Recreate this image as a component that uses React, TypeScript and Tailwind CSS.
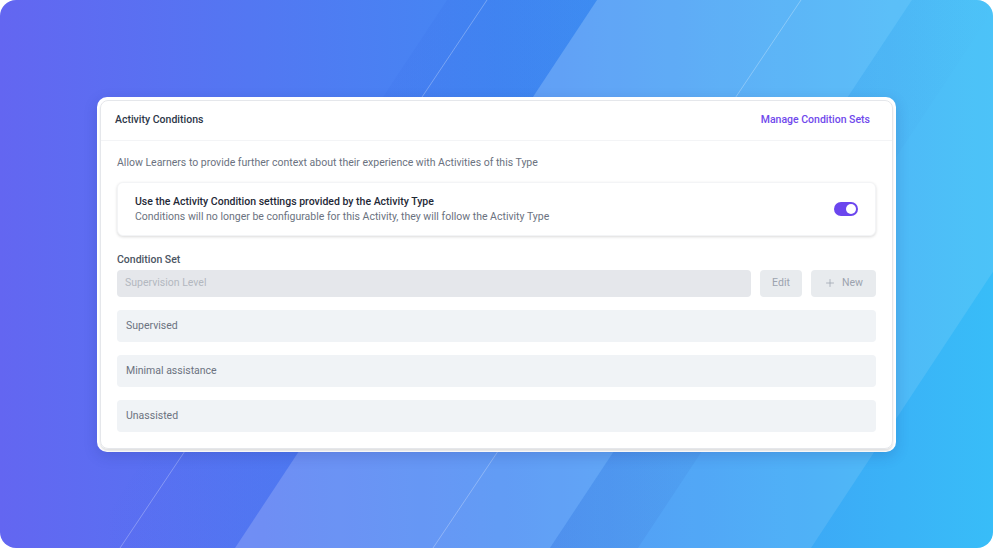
import React from "react";
import { Plus } from "lucide-react";

function Background() {
  return (
    <svg
      className="absolute inset-0 h-full w-full"
      viewBox="0 0 993 548"
      preserveAspectRatio="none"
    >
      <defs>
        <linearGradient id="base" x1="0" y1="0" x2="993" y2="0" gradientUnits="userSpaceOnUse">
          <stop offset="0" stopColor="#6366f1" />
          <stop offset="0.5" stopColor="#4388f3" />
          <stop offset="1" stopColor="#38bdf8" />
        </linearGradient>
        <linearGradient id="shadeA" x1="0" y1="0" x2="1" y2="0">
          <stop offset="0" stopColor="#1d4ed8" stopOpacity="0" />
          <stop offset="1" stopColor="#1d4ed8" stopOpacity="0.1" />
        </linearGradient>
        <linearGradient id="shadeB" x1="0" y1="0" x2="1" y2="0">
          <stop offset="0" stopColor="#1e40af" stopOpacity="0.1" />
          <stop offset="1" stopColor="#1e40af" stopOpacity="0" />
        </linearGradient>
      </defs>
      <rect x="0" y="0" width="993" height="548" fill="url(#base)" />
      <polygon points="447,0 597,0 235,548 85,548" fill="url(#shadeA)" />
      <polygon points="597,0 912,0 550,548 235,548" fill="#ffffff" fillOpacity="0.17" />
      <polygon points="912,0 1172,0 811,548 550,548" fill="#ffffff" fillOpacity="0.1" />
      <polygon points="912,0 1000,0 638,548 550,548" fill="url(#shadeB)" />
      <line x1="487" y1="0" x2="120" y2="548" stroke="#ffffff" strokeOpacity="0.28" strokeWidth="1" />
      <line x1="801" y1="0" x2="433" y2="548" stroke="#ffffff" strokeOpacity="0.28" strokeWidth="1" />
    </svg>
  );
}

const items = ["Supervised", "Minimal assistance", "Unassisted"];

export default function App() {
  return (
    <div
      className="h-[548px] w-[993px] bg-white"
      style={{ fontFamily: "Roboto, 'Liberation Sans', sans-serif" }}
    >
      <div className="relative flex h-full w-full items-center justify-center overflow-hidden rounded-[16px]">
        <Background />
        <div className="relative w-[799px] rounded-[10px] bg-white p-[3px] shadow-[0_4px_14px_rgba(30,41,120,0.18)]">
          <div className="rounded-[8px] border border-gray-200 shadow-[0_2px_2px_rgba(0,0,0,0.12)]">
            <div className="flex h-[40px] items-center justify-between border-b border-gray-100 pl-[14px] pr-[22px]">
              <span className="text-[10.5px] font-medium text-[#2d3748]">Activity Conditions</span>
              <span className="text-[10.5px] font-medium text-[#7049ec]">Manage Condition Sets</span>
            </div>
            <div className="px-[16px] pb-[16px] pt-[15px]">
              <p className="text-[10.5px] leading-[14px] text-[#6b7280]">
                Allow Learners to provide further context about their experience with Activities of this Type
              </p>
              <div className="mt-[12px] flex h-[54px] items-center justify-between rounded-[6px] border border-gray-100 bg-white pl-[17px] pr-[17px] shadow-[0_1px_3px_rgba(0,0,0,0.15)]">
                <div className="flex flex-col">
                  <span className="text-[10.5px] font-medium leading-[15px] text-[#1f2937]">
                    Use the Activity Condition settings provided by the Activity Type
                  </span>
                  <span className="text-[10.5px] leading-[15px] text-[#6b7280]">
                    Conditions will no longer be configurable for this Activity, they will follow the Activity Type
                  </span>
                </div>
                <div className="flex h-[14px] w-[24px] items-center justify-end rounded-full bg-[#6b46ee] pr-[2px]">
                  <div className="h-[10px] w-[10px] rounded-full bg-white" />
                </div>
              </div>
              <div className="mt-[17px] text-[10.5px] font-medium leading-[14px] text-[#4b5563]">Condition Set</div>
              <div className="mt-[3px] flex gap-[9px]">
                <div className="flex h-[27px] flex-1 items-center rounded-[4px] bg-[#e5e7eb] px-[8px] text-[10.5px] text-[#b3b8c0]">
                  Supervision Level
                </div>
                <div className="flex h-[27px] w-[42px] items-center justify-center rounded-[4px] bg-[#e8ebee] text-[10.5px] text-[#9ca3af]">
                  Edit
                </div>
                <div className="flex h-[27px] w-[65px] items-center justify-center gap-[6px] rounded-[4px] bg-[#e8ebee] text-[10.5px] text-[#9ca3af]">
                  <Plus size={12} strokeWidth={1.5} />
                  <span>New</span>
                </div>
              </div>
              <div className="mt-[13px] flex flex-col gap-[13px]">
                {items.map((t) => (
                  <div
                    key={t}
                    className="flex h-[32px] items-center rounded-[4px] bg-[#f0f3f6] px-[9px] text-[10.5px] text-[#6b7280]"
                  >
                    {t}
                  </div>
                ))}
              </div>
            </div>
          </div>
        </div>
      </div>
    </div>
  );
}
